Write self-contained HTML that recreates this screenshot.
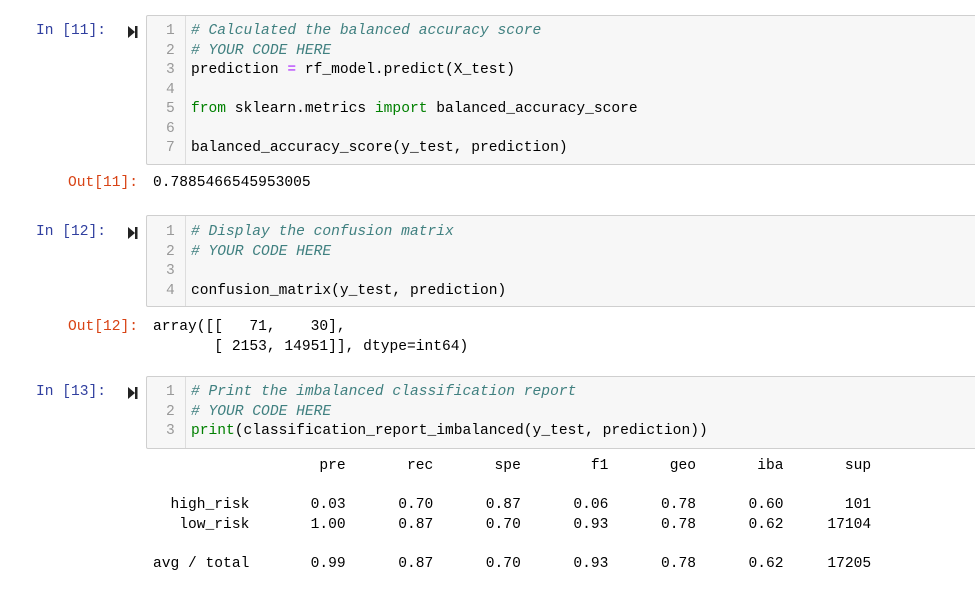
<!DOCTYPE html>
<html><head><meta charset="utf-8">
<style>
body{margin:0;width:975px;height:599px;background:#fff;position:relative;overflow:hidden;font-family:"Liberation Mono",monospace;font-size:14.6px;}
.t{position:absolute;white-space:pre;line-height:18px;}
.box{position:absolute;left:146px;width:840px;background:#f7f7f7;border:1px solid #cfcfcf;border-radius:2px;box-sizing:border-box;}
.gut{position:absolute;left:38px;top:0;bottom:0;border-left:1px solid #ddd;}
.in{color:#303f9f;}
.out{color:#d84315;}
.ln{color:#999;}
.c{color:#408080;font-style:italic;}
.k{color:#008000;}
.o{color:#aa22ff;}
.run{position:absolute;left:128px;width:10px;height:12px;}
</style></head><body>

<div class="t in" style="left:36px;top:22px">In [11]:</div>
<svg class="run" style="top:26px" viewBox="0 0 10 12"><path d="M0 0L7 6L0 12Z" fill="#222"/><rect x="7" y="0" width="2.5" height="12" fill="#222"/></svg>
<div class="box" style="top:15px;height:150px"><div class="gut"></div></div>
<div class="t ln" style="left:166px;top:22px">1
2
3
4
5
6
7</div>
<div class="t" style="left:191px;top:22px;line-height:19.5px"><span class="c"># Calculated the balanced accuracy score</span>
<span class="c"># YOUR CODE HERE</span>
prediction <span class="o">=</span> rf_model.predict(X_test)

<span class="k">from</span> sklearn.metrics <span class="k">import</span> balanced_accuracy_score

balanced_accuracy_score(y_test, prediction)</div>
<style>.ln{line-height:19.5px}</style>
<div class="t out" style="left:68px;top:174px">Out[11]:</div>
<div class="t" style="left:153px;top:174px">0.7885466545953005</div>

<div class="t in" style="left:36px;top:223px">In [12]:</div>
<svg class="run" style="top:227px" viewBox="0 0 10 12"><path d="M0 0L7 6L0 12Z" fill="#222"/><rect x="7" y="0" width="2.5" height="12" fill="#222"/></svg>
<div class="box" style="top:215px;height:92px"><div class="gut"></div></div>
<div class="t ln" style="left:166px;top:223px">1
2
3
4</div>
<div class="t" style="left:191px;top:223px;line-height:19.5px"><span class="c"># Display the confusion matrix</span>
<span class="c"># YOUR CODE HERE</span>

confusion_matrix(y_test, prediction)</div>
<div class="t out" style="left:68px;top:318px">Out[12]:</div>
<div class="t" style="left:153px;top:318px;line-height:19.5px">array([[   71,    30],
       [ 2153, 14951]], dtype=int64)</div>

<div class="t in" style="left:36px;top:383px">In [13]:</div>
<svg class="run" style="top:387px" viewBox="0 0 10 12"><path d="M0 0L7 6L0 12Z" fill="#222"/><rect x="7" y="0" width="2.5" height="12" fill="#222"/></svg>
<div class="box" style="top:376px;height:73px"><div class="gut"></div></div>
<div class="t ln" style="left:166px;top:383px">1
2
3</div>
<div class="t" style="left:191px;top:383px;line-height:19.5px"><span class="c"># Print the imbalanced classification report</span>
<span class="c"># YOUR CODE HERE</span>
<span class="k">print</span>(classification_report_imbalanced(y_test, prediction))</div>

<div class="t" style="left:153px;top:457px;line-height:19.5px">                   pre       rec       spe        f1       geo       iba       sup

  high_risk       0.03      0.70      0.87      0.06      0.78      0.60       101
   low_risk       1.00      0.87      0.70      0.93      0.78      0.62     17104

avg / total       0.99      0.87      0.70      0.93      0.78      0.62     17205</div>
</body></html>
